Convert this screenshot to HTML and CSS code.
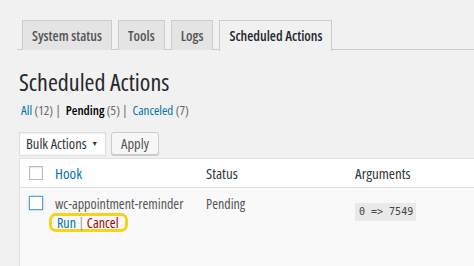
FILE: index.html
```html
<!DOCTYPE html>
<html lang="en">
  <head>
    <meta charset="UTF-8" />
    <title>Scheduled Actions</title>
    <link rel="stylesheet" href="styles.css">
  </head>
  <body>
    <div class="wrap">
      <nav class="nav-tabs">
        <a class="nav-tab" href="#">System status</a>
        <a class="nav-tab" href="#">Tools</a>
        <a class="nav-tab" href="#">Logs</a>
        <a class="nav-tab active" href="#">Scheduled Actions</a>
      </nav>

      <h1 class="page-title">Scheduled Actions</h1>

      <ul class="subsubsub">
        <li><a href="#">All</a> <span class="count">(12)</span> |</li>
        <li><a class="current" href="#">Pending</a> <span class="count">(5)</span> |</li>
        <li><a href="#">Canceled</a> <span class="count">(7)</span></li>
      </ul>

      <div class="tablenav">
        <div class="select">Bulk Actions <span class="caret">&#9660;</span></div>
        <button class="button">Apply</button>
      </div>

      <table class="list-table">
        <thead>
          <tr>
            <th class="check"><span class="checkbox"></span></th>
            <th class="col-hook"><a href="#">Hook</a></th>
            <th class="col-status">Status</th>
            <th class="col-args">Arguments</th>
          </tr>
        </thead>
        <tbody>
          <tr>
            <td class="check"><span class="checkbox focus"></span></td>
            <td class="col-hook">
              wc-appointment-reminder
              <div class="row-actions">
                <a href="#" class="run">Run</a> | <a href="#" class="cancel">Cancel</a>
              </div>
            </td>
            <td class="col-status">Pending</td>
            <td class="col-args"><code>0 =&gt; 7549</code></td>
          </tr>
        </tbody>
      </table>
    </div>
  </body>
</html>
```

FILE: styles.css
```css
body {
  margin: 0;
  background: #f1f1f1;
  font-family: "Open Sans", sans-serif;
  font-stretch: condensed;
  color: #444;
  font-size: 14px;
  overflow: hidden;
}
.wrap {
  padding: 20px 0 0 19px;
}
.nav-tabs {
  display: flex;
  gap: 6px;
  padding-left: 5px;
  border-bottom: 1px solid #ccc;
  height: 29px;
  margin-left: -2px;
}
.nav-tab {
  display: block;
  height: 29px;
  line-height: 29px;
  padding: 0 9px;
  background: #e4e4e4;
  border: 1px solid #ccc;
  border-bottom: none;
  color: #555;
  font-weight: 600;
  font-size: 14px;
  text-decoration: none;
}
.nav-tab.active {
  background: #f1f1f1;
  color: #23282d;
  height: 30px;
  margin-bottom: -1px;
}
.page-title {
  font-size: 24px;
  font-weight: 400;
  color: #23282d;
  margin: 18px 0 0;
  line-height: 28px;
}
.subsubsub {
  list-style: none;
  margin: 5px 0 0 2px;
  padding: 0;
  display: flex;
  gap: 5px;
  font-size: 13px;
  line-height: 18px;
  color: #666;
}
.subsubsub a {
  color: #0073aa;
  text-decoration: none;
}
.subsubsub a.current {
  color: #000;
  font-weight: 600;
}
.tablenav {
  display: flex;
  gap: 5px;
  margin-top: 13px;
  height: 24px;
}
.select {
  width: 87px;
  box-sizing: border-box;
  background: #fff;
  border: 1px solid #ddd;
  padding-left: 6px;
  line-height: 22px;
  font-size: 14.5px;
  color: #32373c;
  white-space: nowrap;
  box-shadow: inset 0 1px 2px rgba(0, 0, 0, 0.07);
}
.caret {
  font-size: 7px;
  vertical-align: 3px;
  margin-left: 2px;
}
.button {
  font-family: inherit;
  font-stretch: inherit;
  font-size: 14.5px;
  color: #555;
  background: #f7f7f7;
  border: 1px solid #ccc;
  border-radius: 3px;
  box-shadow: 0 1px 0 #ccc;
  padding: 0 9px;
  height: 23px;
}
.list-table {
  margin-top: 2px;
  border-collapse: collapse;
  table-layout: fixed;
  width: 480px;
  border: 1px solid #e1e1e1;
  box-shadow: 0 1px 1px rgba(0, 0, 0, 0.04);
}
.list-table th {
  background: #fff;
  text-align: left;
  font-weight: 400;
  font-size: 15px;
  color: #32373c;
  height: 28px;
  border-bottom: 1px solid #e1e1e1;
  padding: 0;
}
.list-table th a {
  color: #0073aa;
  text-decoration: none;
}
.list-table td {
  background: #f9f9f9;
  vertical-align: top;
  padding: 0;
  height: 74px;
  font-size: 14px;
  line-height: 16px;
  color: #555;
  white-space: nowrap;
}
.check {
  width: 35px;
}
.checkbox {
  display: block;
  width: 12px;
  height: 12px;
  border: 1px solid #b4b9be;
  background: #fff;
  margin-left: 9px;
  box-shadow: inset 0 1px 2px rgba(0, 0, 0, 0.1);
}
.list-table td .checkbox {
  margin-top: 8px;
  border-color: #5b9dd9;
  box-shadow: 0 0 2px rgba(30, 140, 190, 0.6);
}
.col-hook {
  width: 151px;
}
.list-table td.col-hook,
.list-table td.col-status {
  padding-top: 8px;
}
.col-status {
  width: 149px;
}
.row-actions {
  display: block;
  width: max-content;
  margin: 1px 0 0 -6px;
  padding: 0 6px 0 5px;
  border: 3px solid #f7d21c;
  border-radius: 7px;
  line-height: 13px;
  color: #999;
}
.row-actions a {
  text-decoration: none;
}
.run {
  color: #0073aa;
}
.cancel {
  color: #a00;
}
.list-table td.col-args {
  padding-top: 14px;
}
code {
  display: inline-block;
  font-family: "DejaVu Sans Mono", "Liberation Mono", monospace;
  font-stretch: normal;
  font-size: 10px;
  line-height: 18px;
  background: #e9e9e9;
  color: #444;
  padding: 0 3px 0 4px;
}
```
